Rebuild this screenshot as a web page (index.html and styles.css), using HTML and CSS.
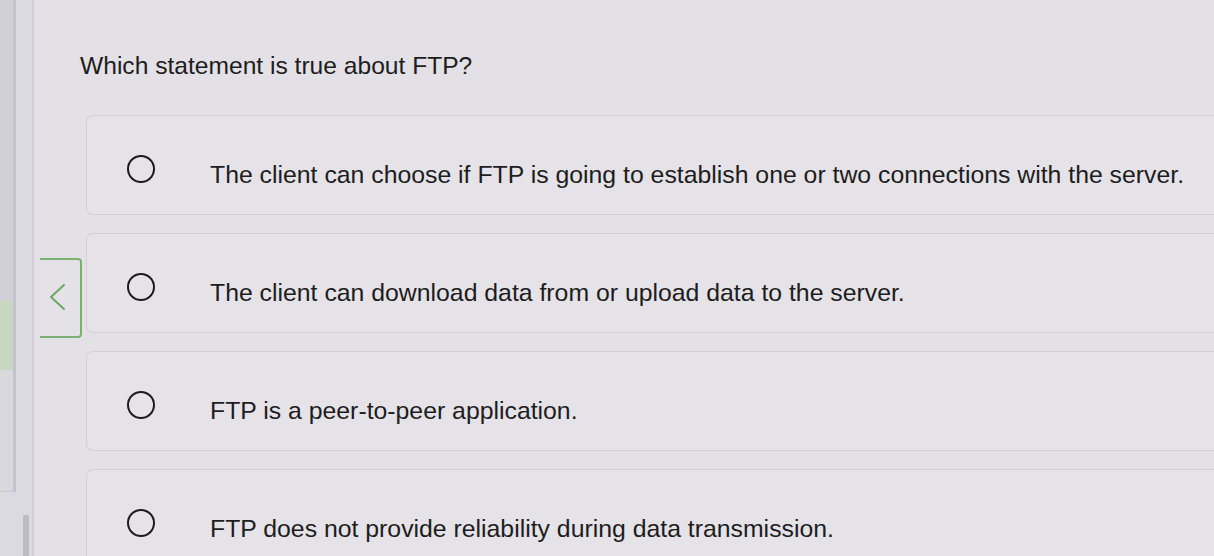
FILE: index.html
```html
<!DOCTYPE html>
<html lang="en">
<head>
<meta charset="utf-8">
<title>Which statement is true about FTP?</title>
<link rel="stylesheet" href="styles.css">
</head>
<body>
<div class="page">
  <aside class="rail">
    <div class="rail-panel">
      <div class="rail-green"></div>
      <div class="rail-grey"></div>
    </div>
    <div class="rail-track">
      <div class="rail-stub"></div>
    </div>
  </aside>
  <main class="quiz">
    <button class="back" aria-label="Back">
      <svg width="22" height="30" viewBox="0 0 22 30"><path d="M17 2 L4 14 L17 26" fill="none" stroke="#6aa865" stroke-width="2" stroke-linecap="round" stroke-linejoin="round"/></svg>
    </button>
    <h1 class="question">Which statement is true about FTP?</h1>
    <ul class="options">
      <li class="option"><span class="radio"></span><span class="label">The client can choose if FTP is going to establish one or two connections with the server.</span></li>
      <li class="option"><span class="radio"></span><span class="label">The client can download data from or upload data to the server.</span></li>
      <li class="option"><span class="radio"></span><span class="label">FTP is a peer-to-peer application.</span></li>
      <li class="option"><span class="radio"></span><span class="label">FTP does not provide reliability during data transmission.</span></li>
    </ul>
  </main>
</div>
</body>
</html>
```
FILE: styles.css
```css
html, body {
  margin: 0;
  height: 100%;
  overflow: hidden;
}
body {
  background: #e3e0e6;
  font-family: "Liberation Sans", Arial, sans-serif;
  color: #1e1d20;
}
.page {
  display: flex;
  height: 556px;
}
.rail {
  width: 32px;
  flex: none;
  background: #dcdae1;
  border-right: 2px solid #cfcdd5;
  display: flex;
}
.rail-panel {
  width: 16px;
  flex: none;
  background: #d1cfd8;
  border-right: 3px solid #c5c3cd;
  display: flex;
  flex-direction: column;
  padding-top: 300px;
  height: 492px;
  box-sizing: border-box;
}
.rail-green {
  height: 70px;
  background: #c9d7c2;
}
.rail-grey {
  flex: 1;
  background: #d9d8dd;
  border-bottom: 1px solid #c8c6cf;
  border-bottom-right-radius: 4px;
}
.rail-track {
  flex: 1;
  display: flex;
  flex-direction: column;
  justify-content: flex-end;
  padding-left: 7px;
}
.rail-stub {
  width: 6px;
  height: 41px;
  background: #bdbbc6;
  border-radius: 2px 2px 0 0;
}
.quiz {
  flex: 1;
  position: relative;
  padding: 48px 0 0 46px;
}
.back {
  position: absolute;
  left: 6px;
  top: 258px;
  width: 42px;
  height: 80px;
  padding: 0 4px 0 0;
  background: #e4e2e7;
  border: 2px solid #7bb073;
  border-left: none;
  border-radius: 0 4px 4px 0;
  display: flex;
  align-items: center;
  justify-content: center;
}
.question {
  margin: 0;
  font-size: 24.6px;
  font-weight: normal;
  line-height: 36px;
  color: #1d1d20;
}
.options {
  list-style: none;
  margin: 31px 0 0 6px;
  padding: 0;
  display: flex;
  flex-direction: column;
  gap: 18px;
}
.option {
  height: 100px;
  border: 1px solid #d2cfd5;
  border-right: none;
  border-radius: 7px 0 0 7px;
  background: #e5e2e8;
  display: flex;
  align-items: center;
  padding: 8px 0 0 40px;
  box-sizing: border-box;
}
.radio {
  width: 24px;
  height: 24px;
  border: 2.5px solid #1c1b1e;
  border-radius: 50%;
  flex: none;
}
.label {
  margin: 12px 0 0 55px;
  font-size: 24.8px;
  color: #1d1d20;
}
```
